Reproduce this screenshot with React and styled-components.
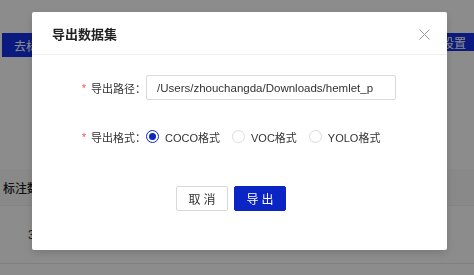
import styled, { createGlobalStyle } from "styled-components"

const GlobalStyle = createGlobalStyle`
  html, body {
    margin: 0;
    padding: 0;
    width: 474px;
    height: 275px;
    overflow: hidden;
    background: #ffffff;
    font-family: "Liberation Sans", "Noto Sans CJK SC", sans-serif;
  }
`

const Page = styled.div`
  width: 474px;
  height: 275px;
  background: #ffffff;
`

const Toolbar = styled.div`
  display: flex;
  justify-content: space-between;
  align-items: flex-start;
  padding: 33px 0 0 2px;
`

const PageButton = styled.div`
  display: flex;
  align-items: center;
  height: ${(p) => p.$h}px;
  padding: 0 ${(p) => p.$pad}px;
  background: #1530e6;
  color: #ffffff;
  font-size: 12px;
  font-family: "Noto Sans CJK SC", sans-serif;
`

const Table = styled.div`
  margin-top: 112px;
`

const HeadRow = styled.div`
  height: 36px;
  display: flex;
  align-items: center;
  padding-left: 3px;
  background: #fafafa;
  border-bottom: 1px solid #f0f0f0;
  font-size: 12px;
  font-weight: 500;
  color: #222;
  font-family: "Noto Sans CJK SC", sans-serif;
`

const BodyRow = styled.div`
  height: 57px;
  display: flex;
  align-items: center;
  padding-left: 28px;
  border-bottom: 1px solid #e8e8e8;
  font-size: 12px;
  color: #333;
`

const Overlay = styled.div`
  position: fixed;
  inset: 0;
  background: rgba(0, 0, 0, 0.45);
`

const Modal = styled.div`
  position: absolute;
  top: 12px;
  left: 32px;
  width: 415px;
  height: 238px;
  background: #ffffff;
  border-radius: 2px;
  box-shadow: 0 3px 8px rgba(0, 0, 0, 0.15);
  display: flex;
  flex-direction: column;
`

const Header = styled.div`
  height: 42px;
  display: flex;
  align-items: center;
  justify-content: space-between;
  padding: 0 17px 0 20px;
  border-bottom: 1px solid #f0f0f0;
`

const Title = styled.div`
  font-family: "Noto Sans CJK SC", sans-serif;
  font-size: 13px;
  font-weight: 600;
  color: #222;
`

const Close = styled.div`
  width: 11px;
  height: 11px;
  display: flex;
  margin-top: 2px;
  color: #999;
`

const Body = styled.div`
  display: flex;
  flex-direction: column;
  padding-top: 20px;
  gap: 24px;
`

const Row = styled.div`
  display: flex;
  align-items: center;
  height: 25px;
`

const Label = styled.div`
  width: 114px;
  display: flex;
  justify-content: flex-end;
  align-items: center;
  font-family: "Noto Sans CJK SC", sans-serif;
  font-size: 11px;
  color: #333;
`

const Star = styled.span`
  color: #ff4d4f;
  font-size: 11px;
  margin-right: 5px;
  font-family: "Liberation Sans", sans-serif;
`

const Input = styled.div`
  width: 250px;
  height: 25px;
  box-sizing: border-box;
  border: 1px solid #d9d9d9;
  border-radius: 2px;
  display: flex;
  align-items: center;
  padding-left: 10px;
  font-size: 11.5px;
  color: #333;
  white-space: nowrap;
  overflow: hidden;
`

const RadioGroup = styled.div`
  display: flex;
  align-items: center;
  gap: 12px;
`

const RadioItem = styled.div`
  display: flex;
  align-items: center;
  gap: 6px;
  font-size: 11px;
  color: #333;
  font-family: "Liberation Sans", "Noto Sans CJK SC", sans-serif;
`

const Circle = styled.span`
  width: 13px;
  height: 13px;
  box-sizing: border-box;
  border-radius: 50%;
  border: 1px solid ${(p) => (p.$checked ? "#0b24c4" : "#dcdcdc")};
  display: flex;
  align-items: center;
  justify-content: center;

  &::after {
    content: "";
    width: 7px;
    height: 7px;
    border-radius: 50%;
    background: ${(p) => (p.$checked ? "#0b24c4" : "transparent")};
  }
`

const Footer = styled.div`
  display: flex;
  gap: 6px;
  padding: 37px 0 0 144px;
`

const Button = styled.div`
  width: 52px;
  height: 25px;
  box-sizing: border-box;
  display: flex;
  align-items: center;
  justify-content: center;
  border-radius: 2px;
  font-family: "Noto Sans CJK SC", sans-serif;
  font-size: 12px;
  letter-spacing: 3px;
  text-indent: 3px;
  border: 1px solid ${(p) => (p.$primary ? "#0b24c4" : "#d9d9d9")};
  background: ${(p) => (p.$primary ? "#0b24c4" : "#ffffff")};
  color: ${(p) => (p.$primary ? "#ffffff" : "#333")};
`

const formats = [
  { name: "COCO格式", checked: true },
  { name: "VOC格式", checked: false },
  { name: "YOLO格式", checked: false },
]

const App = () => {
  return (
    <>
      <GlobalStyle />
      <Page>
        <Toolbar>
          <PageButton $h={24} $pad={12}>去标注</PageButton>
          <PageButton $h={18} $pad={8}>导出设置</PageButton>
        </Toolbar>
        <Table>
          <HeadRow>标注数量</HeadRow>
          <BodyRow>3</BodyRow>
        </Table>
      </Page>
      <Overlay>
        <Modal>
          <Header>
            <Title>导出数据集</Title>
            <Close>
              <svg width="11" height="11" viewBox="0 0 11 11">
                <path d="M0.5 0.5 L10.5 10.5 M10.5 0.5 L0.5 10.5" stroke="currentColor" strokeWidth="1" fill="none" />
              </svg>
            </Close>
          </Header>
          <Body>
            <Row>
              <Label>
                <Star>*</Star>导出路径：
              </Label>
              <Input>/Users/zhouchangda/Downloads/hemlet_p</Input>
            </Row>
            <Row>
              <Label>
                <Star>*</Star>导出格式：
              </Label>
              <RadioGroup>
                {formats.map((f) => (
                  <RadioItem key={f.name}>
                    <Circle $checked={f.checked} />
                    {f.name}
                  </RadioItem>
                ))}
              </RadioGroup>
            </Row>
          </Body>
          <Footer>
            <Button>取消</Button>
            <Button $primary>导出</Button>
          </Footer>
        </Modal>
      </Overlay>
    </>
  )
}

export default App
